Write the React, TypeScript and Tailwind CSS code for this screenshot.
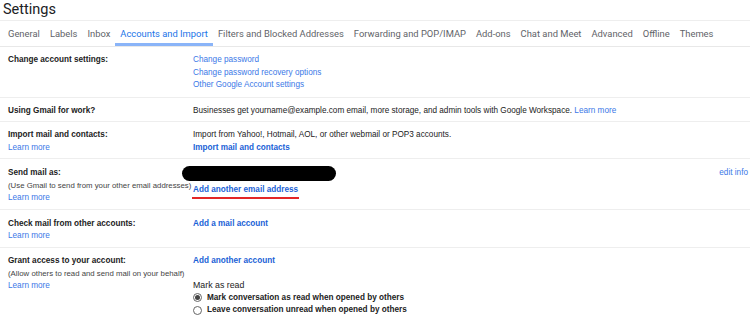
import React from "react";

const TABS = [
  "General",
  "Labels",
  "Inbox",
  "Accounts and Import",
  "Filters and Blocked Addresses",
  "Forwarding and POP/IMAP",
  "Add-ons",
  "Chat and Meet",
  "Advanced",
  "Offline",
  "Themes",
];

const LINK = "text-[#3b78e7]";
const BOLD_LINK = "text-[#1a5fd6] font-bold";

function Label({ title, note, learn }: { title: string; note?: string; learn?: boolean }) {
  return (
    <div className="w-[193px] shrink-0 pl-[8px]">
      <div className="font-bold text-[#222]">{title}</div>
      {note && <div className="whitespace-nowrap text-[7.8px] text-[#444]">{note}</div>}
      {learn && <div className={LINK}>Learn more</div>}
    </div>
  );
}

function Radio({ checked, label }: { checked?: boolean; label: string }) {
  return (
    <div className="flex items-center gap-[5px]">
      <span className="flex h-[9px] w-[9px] items-center justify-center rounded-full border border-[#666]">
        {checked && <span className="h-[5px] w-[5px] rounded-full bg-[#444]" />}
      </span>
      <span className="font-bold text-[#222]">{label}</span>
    </div>
  );
}

export default function App() {
  return (
    <div
      className="h-[320px] w-[750px] overflow-hidden bg-white text-[8.2px] leading-[12.5px] text-[#222]"
      style={{ fontFamily: "'Liberation Sans', Arial, sans-serif" }}
    >
      <div className="h-[21px] border-b border-[#eee] pl-[3px] font-['Roboto',sans-serif] text-[14.5px] leading-[19px] text-[#202124]">
        Settings
      </div>
      <div className="flex h-[26px] border-b border-[#e8e8e8] pl-[3px] font-['Roboto',sans-serif] text-[9.4px] text-[#5f6368]">
        {TABS.map((t) => (
          <div
            key={t}
            className={
              t === "Accounts and Import"
                ? "flex items-center border-b-[3px] border-[#8ab4f8] px-[5px] pt-[5px] text-[#1a73e8]"
                : "flex items-center px-[5px] pt-[2px]"
            }
          >
            {t}
          </div>
        ))}
      </div>

      <div className="flex border-b border-[#eee] pt-[7px] pb-[5.5px]">
        <Label title="Change account settings:" />
        <div className="flex flex-col">
          <span className={LINK}>Change password</span>
          <span className={LINK}>Change password recovery options</span>
          <span className={LINK}>Other Google Account settings</span>
        </div>
      </div>

      <div className="flex border-b border-[#eee] pt-[6.5px] pb-[4px]">
        <Label title="Using Gmail for work?" />
        <div>
          Businesses get yourname@example.com email, more storage, and admin tools with Google Workspace.{" "}
          <span className={LINK}>Learn more</span>
        </div>
      </div>

      <div className="flex border-b border-[#eee] pt-[7px] pb-[4px]">
        <Label title="Import mail and contacts:" learn />
        <div className="flex flex-col">
          <span>Import from Yahoo!, Hotmail, AOL, or other webmail or POP3 accounts.</span>
          <span className={BOLD_LINK}>Import mail and contacts</span>
        </div>
      </div>

      <div className="flex border-b border-[#eee] pt-[8px] pb-[4.5px]">
        <Label title="Send mail as:" note="(Use Gmail to send from your other email addresses)" learn />
        <div className="flex flex-col">
          <div className="-ml-[11px] -mt-[1px] h-[15px] w-[154px] rounded-full bg-black" />
          <div className="-ml-[1px] mt-[3px] w-fit border-b-2 border-[#e32626] px-[1px]">
            <span className={BOLD_LINK}>Add another email address</span>
          </div>
        </div>
        <span className={`${LINK} ml-auto pr-[2px]`}>edit info</span>
      </div>

      <div className="flex border-b border-[#eee] pt-[7.5px] pb-[4.5px]">
        <Label title="Check mail from other accounts:" learn />
        <span className={BOLD_LINK}>Add a mail account</span>
      </div>

      <div className="flex pt-[7px]">
        <Label title="Grant access to your account:" note="(Allow others to read and send mail on your behalf)" learn />
        <div className="flex flex-col">
          <span className={BOLD_LINK}>Add another account</span>
          <span className="mt-[11px] text-[8.8px]">Mark as read</span>
          <div className="mt-[0.5px]">
            <Radio checked label="Mark conversation as read when opened by others" />
            <Radio label="Leave conversation unread when opened by others" />
          </div>
        </div>
      </div>
    </div>
  );
}
